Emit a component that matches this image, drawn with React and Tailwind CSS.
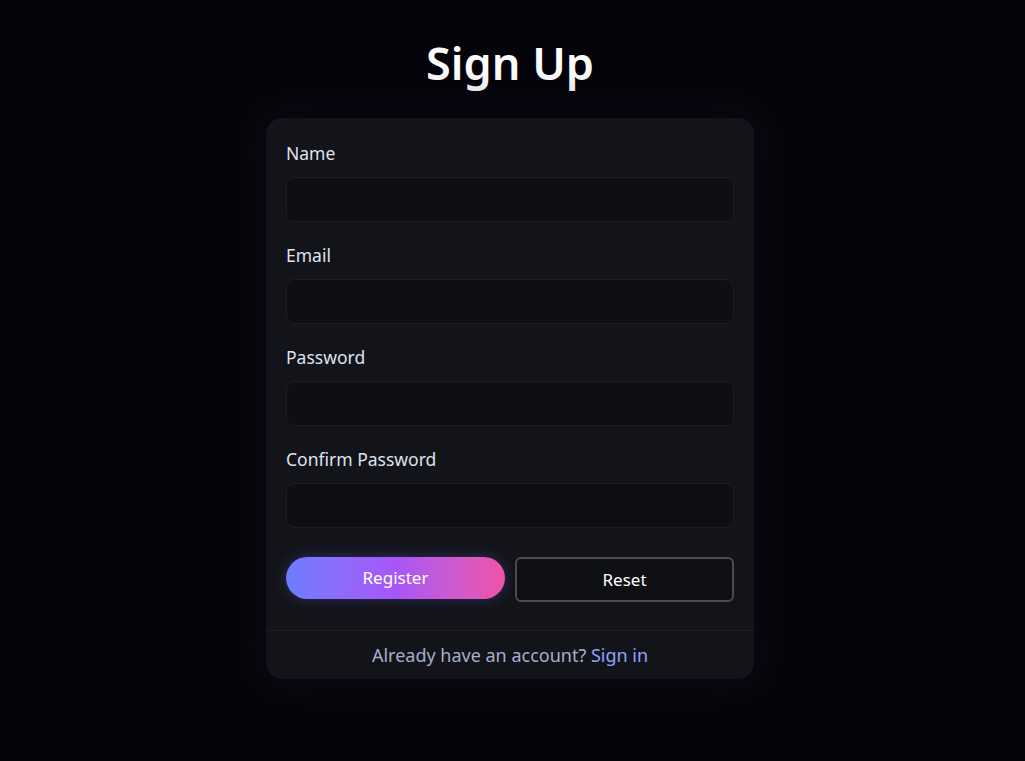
import { useState } from "react";

const Field = ({ label, type, value, onChange }) => (
  <div className="flex flex-col">
    <label className="text-[17.5px] leading-[22px] text-[#dfe2ee] mb-[13px]">{label}</label>
    <input
      type={type}
      value={value}
      onChange={onChange}
      className="h-[45px] w-full rounded-[8px] border border-[#1d1e24] bg-[#0e0f13] px-3 text-[#e5e7eb] outline-none"
    />
  </div>
);

export default function App() {
  const [form, setForm] = useState({ name: "", email: "", password: "", confirm: "" });
  const set = (k) => (e) => setForm({ ...form, [k]: e.target.value });

  return (
    <div className="min-h-[761px] w-full bg-[#05040a] font-['Noto_Sans','Open_Sans',sans-serif] flex flex-col items-center pt-[32px] pr-[5px]">
      <h1 className="text-[45px] leading-[62px] font-semibold text-white">Sign Up</h1>
      <div className="mt-[24px] w-[488px] rounded-[16px] bg-[#131419] shadow-[0_0_40px_12px_rgba(16,16,26,0.5)]">
        <form className="flex flex-col gap-[22px] px-[20px] pt-[24px]" onSubmit={(e) => e.preventDefault()}>
          <Field label="Name" type="text" value={form.name} onChange={set("name")} />
          <Field label="Email" type="email" value={form.email} onChange={set("email")} />
          <Field label="Password" type="password" value={form.password} onChange={set("password")} />
          <Field label="Confirm Password" type="password" value={form.confirm} onChange={set("confirm")} />
          <div className="grid grid-cols-2 gap-[10px] items-start mt-[7px]">
            <button className="h-[42px] rounded-full bg-gradient-to-r from-[#6a7dff] via-[#a855f7] to-[#f052a8] text-white text-[17px] shadow-[0_0_14px_rgba(110,100,255,0.3)]">
              Register
            </button>
            <button
              type="button"
              onClick={() => setForm({ name: "", email: "", password: "", confirm: "" })}
              className="h-[45px] rounded-[6px] border-2 border-[#4a4b50] bg-[#0f1014] text-white text-[17px]"
            >
              Reset
            </button>
          </div>
        </form>
        <div className="mt-[28px] border-t border-[#1d1e24] h-[49px] flex items-center justify-center text-[18px] text-[#a8aecb]">
          <span>
            Already have an account? <a href="#" className="text-[#8ea2ff]">Sign in</a>
          </span>
        </div>
      </div>
    </div>
  );
}
